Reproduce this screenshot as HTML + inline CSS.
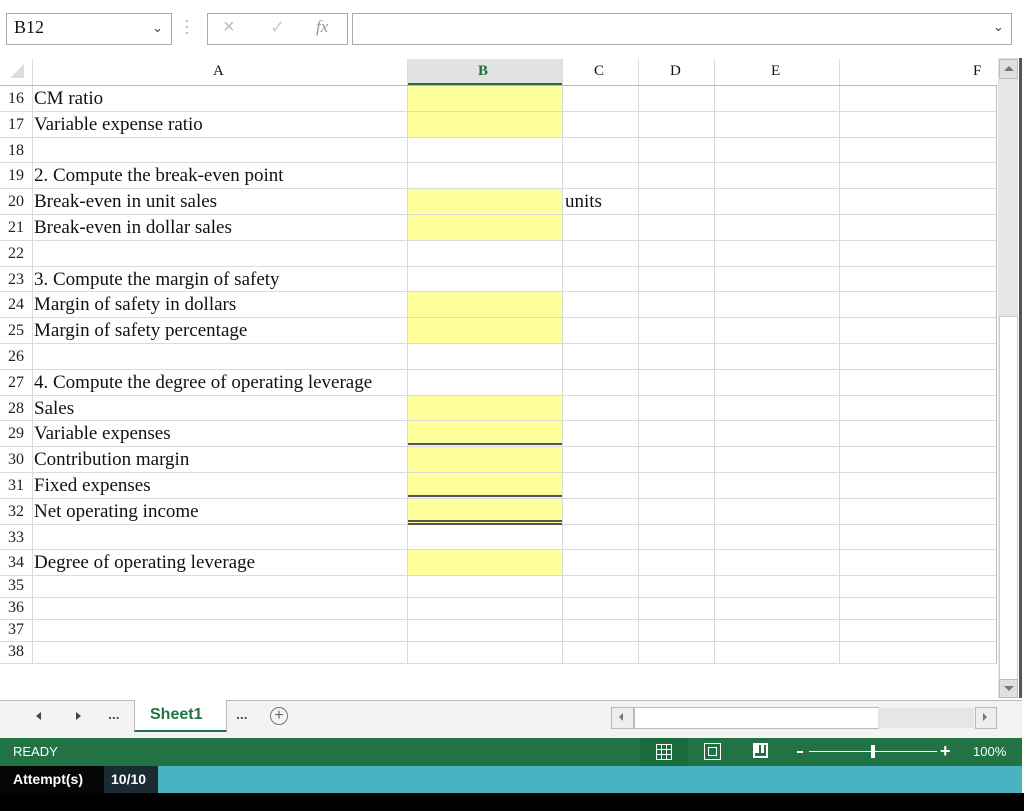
<!DOCTYPE html>
<html><head><style>
body{margin:0;width:1024px;height:811px;overflow:hidden;background:#fff;font-family:"Liberation Serif",serif;position:relative}
.a{position:absolute}
.h{position:absolute;height:1px;background:#dadada}
.v{position:absolute;width:1px;background:#dadada}
.t{position:absolute;font-size:19px;color:#111;line-height:20px}
.rn{position:absolute;left:0;width:24px;text-align:right;font-size:16px;color:#222}
.y{position:absolute;left:408px;width:154px;background:#ffff9c}
.s{font-family:"Liberation Sans",sans-serif}
</style></head><body>
<div class="a" style="left:6px;top:13px;width:164px;height:30px;border:1px solid #aaa;"></div>
<div class="t" style="left:14px;top:17px;font-size:18px">B12</div>
<div class="a s" style="left:152px;top:20px;font-size:13px;color:#444">&#8964;</div>
<div class="a" style="left:186px;top:20px;width:2px;height:2px;background:#bbb;box-shadow:0 6px #bbb,0 12px #bbb"></div>
<div class="a" style="left:207px;top:13px;width:139px;height:30px;border:1px solid #aaa"></div>
<div class="a s" style="left:223px;top:16px;font-size:20px;color:#bbb">×</div>
<div class="a s" style="left:270px;top:17px;font-size:18px;color:#ccc">✓</div>
<div class="a" style="left:316px;top:17px;font-size:17px;color:#999;font-style:italic">fx</div>
<div class="a" style="left:352px;top:13px;width:658px;height:30px;border:1px solid #aaa"></div>
<div class="a s" style="left:993px;top:19px;font-size:13px;color:#444">&#8964;</div>
<div class="a" style="left:10px;top:64px;width:0;height:0;border-left:14px solid transparent;border-bottom:14px solid #ddd"></div>
<div class="a" style="left:407px;top:59px;width:155px;height:26px;background:#e2e2e2;border-bottom:2px solid #217346;box-sizing:border-box"></div>
<div class="t" style="left:213px;top:61px;font-size:15px">A</div>
<div class="t" style="left:478px;top:61px;font-size:15px;color:#217346;font-weight:bold">B</div>
<div class="t" style="left:594px;top:61px;font-size:15px">C</div>
<div class="t" style="left:670px;top:61px;font-size:15px">D</div>
<div class="t" style="left:771px;top:61px;font-size:15px">E</div>
<div class="t" style="left:973px;top:61px;font-size:15px">F</div>
<div class="y" style="top:86px;height:51px"></div>
<div class="y" style="top:189px;height:51px"></div>
<div class="y" style="top:292px;height:51px"></div>
<div class="y" style="top:395px;height:128px"></div>
<div class="y" style="top:550px;height:25px"></div>
<div id="g"></div>
<div class="a" style="left:408px;top:443px;width:154px;height:2px;background:#555"></div>
<div class="a" style="left:408px;top:495px;width:154px;height:2px;background:#555"></div>
<div class="a" style="left:408px;top:520px;width:154px;height:2px;background:#555;box-shadow:0 3px #555"></div>
<div class="v" style="left:32px;top:59px;height:604px"></div>
<div class="v" style="left:407px;top:59px;height:604px"></div>
<div class="v" style="left:562px;top:59px;height:604px"></div>
<div class="v" style="left:638px;top:59px;height:604px"></div>
<div class="v" style="left:714px;top:59px;height:604px"></div>
<div class="v" style="left:839px;top:59px;height:604px"></div>
<div class="v" style="left:996px;top:85px;height:578px;background:#bbb"></div>
<div class="h" style="left:0;top:85px;width:997px;background:#bbb"></div>
<script>
var ys=[],y=85;for(var i=16;i<=34;i++){ys.push(y);y+=25.8}for(i=35;i<=38;i++){ys.push(y);y+=22}ys.push(y);
var h='';var lab={16:'CM ratio',17:'Variable expense ratio',19:'2. Compute the break-even point',20:'Break-even in unit sales',21:'Break-even in dollar sales',23:'3. Compute the margin of safety',24:'Margin of safety in dollars',25:'Margin of safety percentage',27:'4. Compute the degree of operating leverage',28:'Sales',29:'Variable expenses',30:'Contribution margin',31:'Fixed expenses',32:'Net operating income',34:'Degree of operating leverage'};
for(i=0;i<ys.length;i++){h+='<div class="h" style="left:0;top:'+Math.round(ys[i])+'px;width:997px"></div>';}
for(i=16;i<=38;i++){var t=Math.round(ys[i-16]);var big=i<=34;h+='<div class="rn" style="top:'+(t+(big?5:2))+'px">'+i+'</div>';if(lab[i])h+='<div class="t" style="left:34px;top:'+(t+4)+'px">'+lab[i]+'</div>';if(i==20)h+='<div class="t" style="left:565px;top:'+(t+4)+'px">units</div>';}
document.getElementById('g').innerHTML=h;
</script>
<div class="a" style="left:998px;top:58px;width:20px;height:640px;background:#e6e6e6"></div>
<div class="a" style="left:999px;top:316px;width:19px;height:364px;background:#fff;border:1px solid #ccc;box-sizing:border-box"></div>
<div class="a" style="left:999px;top:59px;width:19px;height:20px;background:#e0e0e0;border:1px solid #bbb;box-sizing:border-box"></div>
<div class="a" style="left:1004px;top:66px;border-left:5px solid transparent;border-right:5px solid transparent;border-bottom:5px solid #777"></div>
<div class="a" style="left:999px;top:679px;width:19px;height:19px;background:#e0e0e0;border:1px solid #bbb;box-sizing:border-box"></div>
<div class="a" style="left:1004px;top:686px;border-left:5px solid transparent;border-right:5px solid transparent;border-top:5px solid #777"></div>
<div class="a" style="left:1019px;top:58px;width:3px;height:640px;background:#555"></div>
<div class="a" style="left:0;top:700px;width:1022px;height:38px;background:#f3f3f3;border-top:1px solid #bbb"></div>
<div class="a" style="left:36px;top:712px;border-top:4px solid transparent;border-bottom:4px solid transparent;border-right:5px solid #444"></div>
<div class="a" style="left:76px;top:712px;border-top:4px solid transparent;border-bottom:4px solid transparent;border-left:5px solid #444"></div>
<div class="a s" style="left:108px;top:706px;font-size:14px;color:#555;font-weight:bold">...</div>
<div class="a" style="left:134px;top:700px;width:91px;height:30px;background:#fff;border-left:1px solid #bbb;border-right:1px solid #bbb;border-bottom:2px solid #217346"></div>
<div class="a s" style="left:150px;top:706px;font-size:16px;color:#217346;font-weight:bold">Sheet1</div>
<div class="a s" style="left:236px;top:706px;font-size:14px;color:#555;font-weight:bold">...</div>
<div class="a s" style="left:270px;top:707px;width:16px;height:16px;border:1.5px solid #777;border-radius:50%;text-align:center;line-height:16px;font-size:16px;color:#666">+</div>
<div class="a" style="left:611px;top:707px;width:21px;height:20px;border:1px solid #bbb;background:#eee"></div>
<div class="a" style="left:619px;top:713px;border-top:4px solid transparent;border-bottom:4px solid transparent;border-right:4px solid #777"></div>
<div class="a" style="left:634px;top:707px;width:243px;height:20px;border:1px solid #bbb;background:#fff"></div>
<div class="a" style="left:878px;top:708px;width:96px;height:20px;background:#e6e6e6"></div>
<div class="a" style="left:975px;top:707px;width:20px;height:20px;border:1px solid #bbb;background:#eee"></div>
<div class="a" style="left:983px;top:713px;border-top:4px solid transparent;border-bottom:4px solid transparent;border-left:4px solid #777"></div>
<div class="a" style="left:0;top:738px;width:1022px;height:28px;background:#217346"></div>
<div class="a s" style="left:13px;top:744px;font-size:13px;color:#fff">READY</div>
<div class="a" style="left:640px;top:738px;width:48px;height:28px;background:#1a6a3c"></div>
<div class="a" style="left:656px;top:744px;width:14px;height:14px;border:1px solid #fff;background:linear-gradient(90deg,transparent 4px,#fff 4px,#fff 5px,transparent 5px,transparent 9px,#fff 9px,#fff 10px,transparent 10px),linear-gradient(0deg,transparent 4px,#fff 4px,#fff 5px,transparent 5px,transparent 9px,#fff 9px,#fff 10px,transparent 10px)"></div>
<div class="a" style="left:704px;top:743px;width:15px;height:15px;border:1px solid #fff"></div>
<div class="a" style="left:708px;top:747px;width:7px;height:7px;border:1px solid #fff"></div>
<div class="a" style="left:753px;top:743px;width:15px;height:15px;border:2px solid #fff;box-sizing:border-box;background:linear-gradient(90deg,#fff 0 4px,transparent 4px 6px,#fff 6px 9px,transparent 9px);background-size:100% 8px;background-repeat:no-repeat"></div>
<div class="a" style="left:797px;top:751px;width:6px;height:2px;background:#fff"></div>
<div class="a" style="left:809px;top:751px;width:128px;height:1px;background:#fff"></div>
<div class="a" style="left:871px;top:745px;width:4px;height:13px;background:#fff"></div>
<div class="a s" style="left:940px;top:741px;font-size:18px;color:#fff;font-weight:bold">+</div>
<div class="a s" style="left:973px;top:744px;font-size:13px;color:#fff">100%</div>
<div class="a" style="left:0;top:766px;width:1022px;height:27px;background:#4ab3c2"></div>
<div class="a" style="left:0;top:766px;width:104px;height:27px;background:#060606"></div>
<div class="a" style="left:104px;top:766px;width:54px;height:27px;background:#1a2b33"></div>
<div class="a s" style="left:13px;top:771px;font-size:14px;color:#fff;font-weight:bold">Attempt(s)</div>
<div class="a s" style="left:111px;top:771px;font-size:14px;color:#fff;font-weight:bold">10/10</div>
<div class="a" style="left:0;top:793px;width:1024px;height:18px;background:#000"></div>
</body></html>
